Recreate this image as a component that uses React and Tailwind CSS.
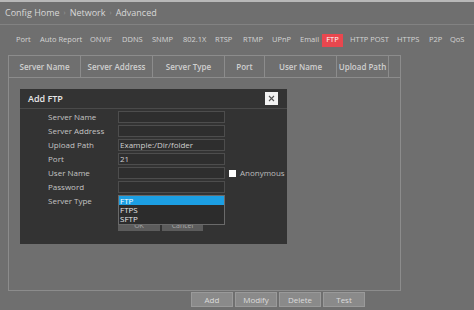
import React from "react";

const tabs = [
  ["Port", "w-[24px]"],
  ["Auto Report", "w-[50px]"],
  ["ONVIF", "w-[32px]"],
  ["DDNS", "w-[30px]"],
  ["SNMP", "w-[31px]"],
  ["802.1X", "w-[32px]"],
  ["RTSP", "w-[28px]"],
  ["RTMP", "w-[29px]"],
  ["UPnP", "w-[28px]"],
  ["Email", "w-[22px]"],
  ["FTP", "w-[21px]"],
  ["HTTP POST", "w-[54px] pl-[7px]"],
  ["HTTPS", "w-[32px]"],
  ["P2P", "w-[21px]"],
  ["QoS", "w-[20px]"],
];
const cols = [
  ["Server Name", "w-[72px]"],
  ["Server Address", "w-[72px]"],
  ["Server Type", "w-[72px]"],
  ["Port", "w-[40px]"],
  ["User Name", "w-[72px]"],
  ["Upload Path", "w-[52px]"],
];
const fields = [
  ["Server Name", ""],
  ["Server Address", ""],
  ["Upload Path", "Example:/Dir/folder"],
  ["Port", "21"],
  ["User Name", ""],
  ["Password", ""],
];

export default function App() {
  return (
    <div className="relative w-[474px] h-[310px] overflow-hidden bg-[#6f6f6f] font-['Open_Sans',sans-serif]">
      <div className="h-[2px] bg-[#b8b8b8]" />
      <div className="flex h-[22px] items-center gap-[4px] px-[5px] text-[9px] text-[#d8d8d8]">
        <span>Config Home</span>
        <span className="text-[7px] text-[#9a9a9a]">›</span>
        <span>Network</span>
        <span className="text-[7px] text-[#9a9a9a]">›</span>
        <span>Advanced</span>
      </div>
      <div className="h-px bg-[#828282]" />
      <div className="flex h-[30px] items-center whitespace-nowrap pl-[16px] text-[7.5px] text-[#d4d4d4]">
        {tabs.map(([t, w]) => (
          <span
            key={t}
            className={
              t === "FTP"
                ? `${w} flex h-[13px] shrink-0 items-center justify-center bg-[#e9474e] text-white`
                : `${w} shrink-0`
            }
          >
            {t}
          </span>
        ))}
      </div>
      <div className="ml-[8px] h-[236px] w-[393px] border border-[#8c8c8c]">
        <div className="flex h-[22px] border-b border-[#8c8c8c] text-[8px] font-semibold text-[#d0d0d0]">
          {cols.map(([c, w]) => (
            <div key={c} className={`${w} flex items-center justify-center border-r border-[#8c8c8c]`}>
              {c}
            </div>
          ))}
        </div>
      </div>
      <div className="mt-[1px] flex gap-[2px] pl-[191px] text-[8px] text-[#dcdcdc]">
        {["Add", "Modify", "Delete", "Test"].map((b) => (
          <div key={b} className="flex h-[15px] w-[42px] items-center justify-center border border-[#9a9a9a] bg-[#8a8a8a]">
            {b}
          </div>
        ))}
      </div>

      {/* modal */}
      <div className="absolute left-[20px] top-[89px] h-[155px] w-[267px] bg-[#333333]">
        <div className="flex h-[20px] items-center justify-between border-b border-[#4a4a4a] pl-[8px] pr-[9px]">
          <span className="text-[9px] font-semibold text-[#e6e6e6]">Add FTP</span>
          <div className="flex h-[13px] w-[13px] items-center justify-center bg-[#f2f2f2]">
            <svg width="7" height="7" viewBox="0 0 7 7">
              <path d="M1 1L6 6M6 1L1 6" stroke="#555" strokeWidth="1.1" />
            </svg>
          </div>
        </div>
        <div className="flex flex-col gap-[2px] pl-[28px] pt-[2px] text-[8px] text-[#c4c4c4]">
          {fields.map(([l, v]) => (
            <div key={l} className="flex h-[12px] items-center">
              <span className="w-[70px]">{l}</span>
              <div className="flex h-[12px] w-[107px] items-center border border-[#4d4d4d] bg-[#2e2e2e] pl-[1px] text-[#cfcfcf]">
                {v}
              </div>
              {l === "User Name" && (
                <div className="ml-[4px] flex items-center gap-[4px] text-[#bdbdbd]">
                  <div className="h-[7px] w-[7px] bg-white" />
                  <span>Anonymous</span>
                </div>
              )}
            </div>
          ))}
          <div className="flex h-[12px] items-center">
            <span className="w-[70px]">Server Type</span>
          </div>
          <div className="mt-[10px] flex gap-[2px] pl-[70px] text-[7px] leading-[8px] text-[#aaaaaa]">
            <div className="flex h-[12px] w-[42px] items-end justify-center bg-[#5c5c5c] pb-[1px]">OK</div>
            <div className="flex h-[12px] w-[41px] items-end justify-center bg-[#5c5c5c] pb-[1px]">Cancel</div>
          </div>
        </div>
      </div>

      {/* open select list */}
      <div className="absolute left-[118px] top-[195px] w-[107px] border border-[#6a6a6a] bg-[#2c2c2c] text-[8px] leading-[9px] text-[#e8e8e8]">
        <div className="bg-[#1c9fe3] pl-[1px] text-white">FTP</div>
        <div className="pl-[1px]">FTPS</div>
        <div className="pb-[1px] pl-[1px]">SFTP</div>
      </div>
    </div>
  );
}
